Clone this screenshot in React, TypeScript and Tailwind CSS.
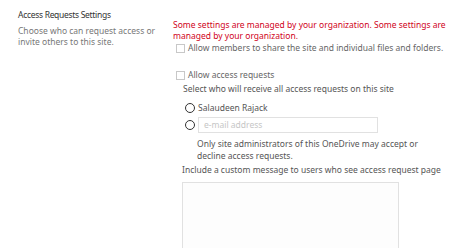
import type { ReactNode } from 'react'

// Unchecked, disabled checkbox.
function Box() {
  return <span className="inline-block w-[9px] h-[9px] border border-[#c8c8c8] bg-white shrink-0" />
}

function Radio() {
  return <span className="inline-block w-[10px] h-[10px] rounded-full border border-[#333] bg-white shrink-0" />
}

function Row({ children, className = '' }: { children: ReactNode; className?: string }) {
  return <div className={`flex items-center h-[12px] ${className}`}>{children}</div>
}

export default function App() {
  return (
    <div
      className="w-[474px] h-[248px] overflow-hidden bg-white flex text-[8.5px] leading-[12px] text-[#444]"
      style={{ fontFamily: '"Noto Sans", "Open Sans", sans-serif' }}
    >
      <div className="w-[173px] pl-[18px] pt-[9px] shrink-0">
        <div className="text-[8.5px] tracking-[-0.3px] text-[#333]">Access Requests Settings</div>
        <div className="mt-[4px] w-[145px] text-[#777] leading-[11px]">
          Choose who can request access or invite others to this site.
        </div>
      </div>
      <div className="flex-1 pt-[19px]">
        <div className="w-[285px] text-[#d0021b] leading-[11px]">
          Some settings are managed by your organization. Some settings are managed by your organization.
        </div>
        <Row className="mt-[1px] ml-[3px] gap-[3px] text-[#666]">
          <Box />
          <span>Allow members to share the site and individual files and folders.</span>
        </Row>
        <Row className="mt-[15px] ml-[3px] gap-[3px] text-[#666]">
          <Box />
          <span>Allow access requests</span>
        </Row>
        <div className="ml-[10px] mt-[2px] text-[#555]">Select who will receive all access requests on this site</div>
        <Row className="ml-[12px] mt-[7px] gap-[3px] text-[#555]">
          <Radio />
          <span>Salaudeen Rajack</span>
        </Row>
        <div className="flex items-center ml-[12px] mt-[3px] gap-[3px]">
          <Radio />
          <div className="w-[180px] h-[16px] border border-[#e1e1e1] px-[5px] flex items-center text-[#c6c6c6]">
            e-mail address
          </div>
        </div>
        <div className="ml-[24px] mt-[5px] w-[235px] text-[#555]">
          Only site administrators of this OneDrive may accept or decline access requests.
        </div>
        <div className="ml-[9px] mt-[2px] text-[#555]">Include a custom message to users who see access request page</div>
        <div className="ml-[9px] mt-[6px] w-[217px] h-[80px] border border-[#e1e1e1] bg-[#fdfdfd]" />
      </div>
    </div>
  )
}
